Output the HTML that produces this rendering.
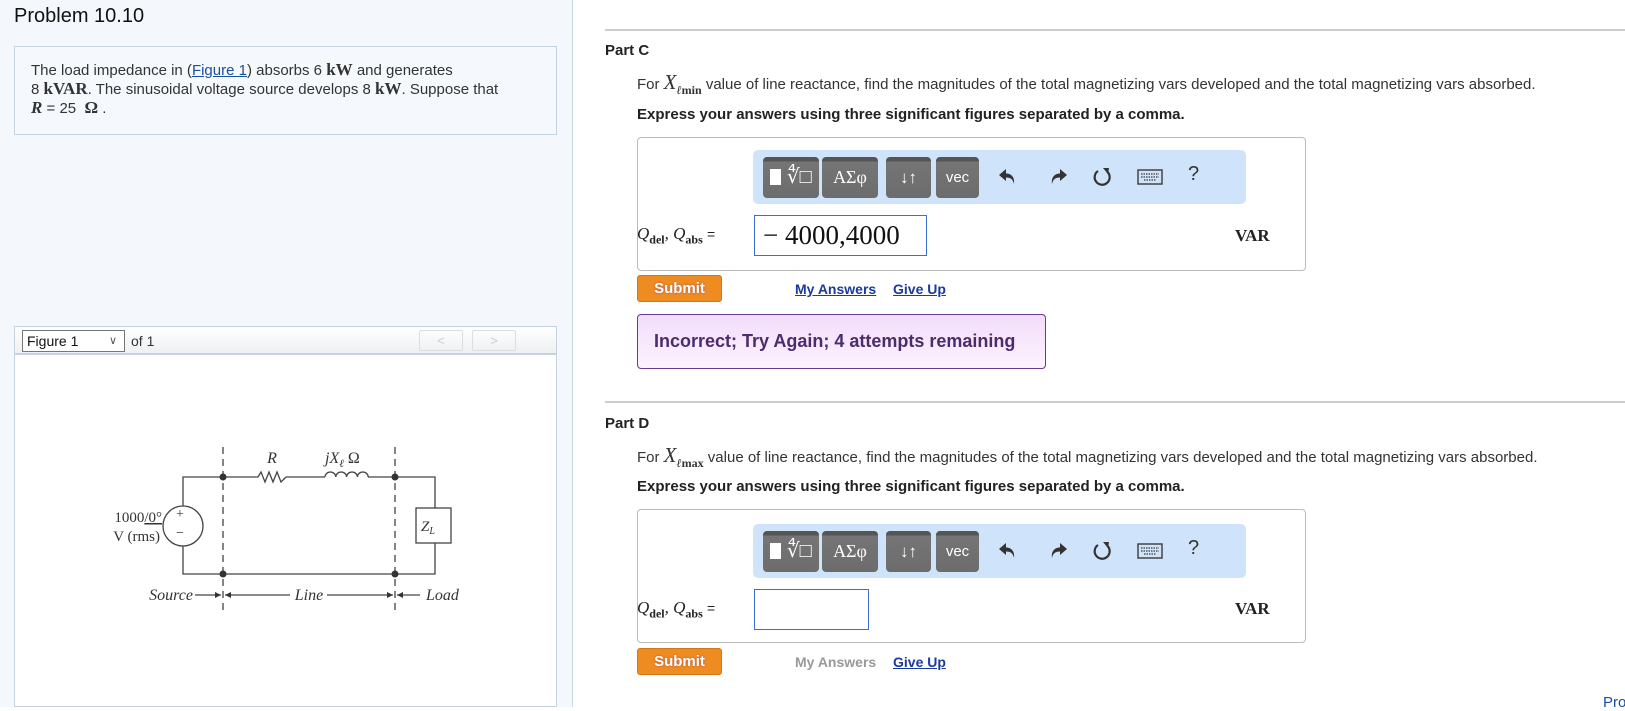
<!DOCTYPE html>
<html><head><meta charset="utf-8"><style>
*{margin:0;padding:0;box-sizing:border-box}
body{width:1625px;height:707px;overflow:hidden;background:#fff;font-family:"Liberation Sans",Arial,sans-serif;color:#222;position:relative}
.a{position:absolute}
.m{font-family:"Liberation Serif",serif}
.tb{background:#cfe4fb;border-radius:5px}
.btn{position:absolute;top:7px;height:41px;background:linear-gradient(#555 0,#555 4px,#757575 5px,#6c6c6c);border-radius:4px;color:#fff;text-align:center;line-height:41px}
.ic{position:absolute;top:16px}
.sub{background:#ee8c22;border:1px solid #d07918;border-radius:3px;color:#fff;font-weight:bold;font-size:15px;text-align:center;line-height:25px;text-shadow:0 0 2px #a55}
.lnk{color:#1a3a9c;font-weight:bold;font-size:14px;text-decoration:underline}
</style></head><body>
<div class="a" style="left:0;top:0;width:573px;height:707px;background:#f4f8fd;border-right:1px solid #c9d6e3"></div>
<div class="a" style="left:14px;top:5px;font-size:20px;color:#111">Problem 10.10</div>
<div class="a" style="left:14px;top:46px;width:543px;height:89px;border:1px solid #c5d3e0;background:#f5f9fd"></div>
<div class="a" style="left:31px;top:61px;font-size:15px;line-height:18px;color:#333">The load impedance in (<span style="color:#1a4ea0;text-decoration:underline">Figure 1</span>) absorbs 6 <b class="m" style="font-size:17px">kW</b> and generates<br>8 <b class="m" style="font-size:17px">kVAR</b>. The sinusoidal voltage source develops 8 <b class="m" style="font-size:17px">kW</b>. Suppose that<br><b class="m" style="font-size:17px;font-style:italic">R</b> = 25 &nbsp;<b class="m" style="font-size:17px">Ω</b> .</div>
<div class="a" style="left:14px;top:326px;width:543px;height:381px;border:1px solid #c5d3e0;background:#fff"></div>
<div class="a" style="left:15px;top:327px;width:541px;height:28px;background:linear-gradient(#fff,#eef0f2);border-bottom:2px solid #c5d3e0"></div>
<div class="a" style="left:22px;top:330px;width:103px;height:22px;border:1px solid #777;background:#fff;font-size:14px;line-height:20px;padding-left:4px;color:#111">Figure 1<span class="a" style="left:86px;top:0;font-size:11px;color:#555">∨</span></div>
<div class="a" style="left:131px;top:333px;font-size:14px;color:#333">of 1</div>
<div class="a" style="left:419px;top:330px;width:44px;height:21px;border:1px solid #ddd;border-radius:2px;color:#ccc;text-align:center;font-size:13px;line-height:19px">&lt;</div>
<div class="a" style="left:472px;top:330px;width:44px;height:21px;border:1px solid #ddd;border-radius:2px;color:#ccc;text-align:center;font-size:13px;line-height:19px">&gt;</div>
<svg class="a" style="left:80px;top:420px" width="420" height="200" viewBox="80 420 420 200" font-family="Liberation Serif" fill="#333">
<g stroke="#444" stroke-width="1.3" fill="none">
<polyline points="183,506 183,477 258,477"/><polyline points="286,477 325,477"/><polyline points="368,477 435,477 435,508"/>
<polyline points="435,543 435,574 183,574 183,546"/>
<circle cx="183" cy="526" r="20"/>
<polyline points="258,477 261,472 265,482 269,472 273,482 277,472 281,482 286,477"/>
<path d="M325,477 a5.4,5 0 0 1 10.8,0 a5.4,5 0 0 1 10.8,0 a5.4,5 0 0 1 10.8,0 a5.4,5 0 0 1 10.8,0"/>
<rect x="416" y="508" width="35" height="35"/>
<path d="M223,447 V610 M395,447 V610" stroke-dasharray="7,5"/>
<path d="M195,595 H221 M225,595 H290 M327,595 H393 M397,595 H420"/>
</g>
<circle cx="223" cy="477" r="3.5"/><circle cx="395" cy="477" r="3.5"/><circle cx="223" cy="574" r="3.5"/><circle cx="395" cy="574" r="3.5"/>
<path d="M221,595 l-6,-3 v6z M225,595 l6,-3 v6z M393,595 l-6,-3 v6z M397,595 l6,-3 v6z"/>
<text x="176" y="518" font-size="14">+</text><text x="176" y="537" font-size="14">−</text>
<text x="272" y="463" font-size="16" font-style="italic" text-anchor="middle">R</text>
<text x="325" y="463" font-size="16"><tspan font-style="italic">jX</tspan><tspan font-style="italic" font-size="11" dy="4">ℓ</tspan><tspan dy="-4"> Ω</tspan></text>
<text x="162" y="522" font-size="15" text-anchor="end">1000<tspan text-decoration="underline">/0°</tspan></text>
<text x="160" y="541" font-size="15" text-anchor="end">V (rms)</text>
<text x="421" y="531" font-size="15" font-style="italic">Z<tspan font-size="10" dy="3">L</tspan></text>
<text x="193" y="600" font-size="16" font-style="italic" text-anchor="end">Source</text>
<text x="309" y="600" font-size="16" font-style="italic" text-anchor="middle">Line</text>
<text x="426" y="600" font-size="16" font-style="italic">Load</text>
</svg>

<!-- Part C -->
<div class="a" style="left:605px;top:29px;width:1020px;height:2px;background:#ccc"></div>
<div class="a" style="left:605px;top:42px;font-size:15px;font-weight:bold;color:#222">Part C</div>
<div class="a" style="left:637px;top:70px;font-size:15px;color:#333">For <span class="m" style="font-size:21px;font-style:italic">X<sub style="font-size:12px;font-style:normal;font-weight:bold"><i>ℓ</i>min</sub></span> value of line reactance, find the magnitudes of the total magnetizing vars developed and the total magnetizing vars absorbed.</div>
<div class="a" style="left:637px;top:106px;font-size:15px;font-weight:bold;color:#222">Express your answers using three significant figures separated by a comma.</div>
<div class="a" style="left:637px;top:137px;width:669px;height:134px;border:1px solid #bbb;border-radius:4px"></div>
<div class="a tb" style="left:753px;top:150px;width:493px;height:54px">
<div class="btn" style="left:10px;width:56px;font-size:20px"><span style="display:inline-block;width:11px;height:16px;background:#fff;vertical-align:-2px"></span> ∜□</div>
<div class="btn m" style="left:69px;width:56px;font-size:18px">ΑΣφ</div>
<div class="btn" style="left:133px;width:45px;font-size:17px">↓↑</div>
<div class="btn" style="left:183px;width:43px;font-size:15px">vec</div>
<svg class="ic" style="left:244px" width="22" height="22" viewBox="0 0 22 22"><path d="M9 3 L2 9 L9 15 V11.5 C14 11.5 16 13.5 17 18 C18 11 14 7.5 9 7.5 Z" fill="#333"/></svg>
<svg class="ic" style="left:294px" width="22" height="22" viewBox="0 0 22 22"><path d="M13 3 L20 9 L13 15 V11.5 C8 11.5 6 13.5 5 18 C4 11 8 7.5 13 7.5 Z" fill="#333"/></svg>
<svg class="ic" style="left:339px" width="22" height="22" viewBox="0 0 22 22"><path d="M15 5.5 A7.5 7.5 0 1 1 6 5" fill="none" stroke="#333" stroke-width="2.2"/><path d="M11 2 L17 2 L16 8 Z" fill="#333"/></svg>
<svg class="ic" style="left:384px;top:19px" width="26" height="16" viewBox="0 0 26 16"><rect x="1" y="1" width="24" height="14" fill="none" stroke="#444" stroke-width="1.5"/><path d="M4 5h18M4 8h18M7 11h12" stroke="#555" stroke-width="1.5" stroke-dasharray="1.5,1"/></svg>
<div class="a" style="left:435px;top:13px;font-size:20px;color:#333">?</div>
</div>
<div class="a m" style="left:637px;top:224px;font-size:17px;font-style:italic">Q<sub style="font-size:12px;font-style:normal;font-weight:bold">del</sub>, Q<sub style="font-size:12px;font-style:normal;font-weight:bold">abs</sub> <span style="font-family:'Liberation Sans';font-style:normal;font-size:14px">=</span></div>
<div class="a m" style="left:754px;top:215px;width:173px;height:41px;border:1px solid #3a6fd0;font-size:27px;line-height:38px;padding-left:8px;color:#111">− 4000,4000</div>
<div class="a m" style="left:1235px;top:226px;font-size:17px;font-weight:bold">VAR</div>
<div class="a sub" style="left:637px;top:275px;width:85px;height:27px">Submit</div>
<div class="a lnk" style="left:795px;top:281px">My Answers</div>
<div class="a lnk" style="left:893px;top:281px">Give Up</div>
<div class="a" style="left:637px;top:314px;width:409px;height:55px;border:1px solid #6a3a8e;border-radius:4px;background:linear-gradient(#f2dcfa,#fdf2fe);color:#4b2d6b;font-weight:bold;font-size:18px;line-height:53px;padding-left:16px">Incorrect; Try Again; 4 attempts remaining</div>

<!-- Part D -->
<div class="a" style="left:605px;top:401px;width:1020px;height:2px;background:#ccc"></div>
<div class="a" style="left:605px;top:415px;font-size:15px;font-weight:bold;color:#222">Part D</div>
<div class="a" style="left:637px;top:443px;font-size:15px;color:#333">For <span class="m" style="font-size:21px;font-style:italic">X<sub style="font-size:12px;font-style:normal;font-weight:bold"><i>ℓ</i>max</sub></span> value of line reactance, find the magnitudes of the total magnetizing vars developed and the total magnetizing vars absorbed.</div>
<div class="a" style="left:637px;top:478px;font-size:15px;font-weight:bold;color:#222">Express your answers using three significant figures separated by a comma.</div>
<div class="a" style="left:637px;top:509px;width:669px;height:134px;border:1px solid #bbb;border-radius:4px"></div>
<div class="a tb" style="left:753px;top:524px;width:493px;height:54px">
<div class="btn" style="left:10px;width:56px;font-size:20px"><span style="display:inline-block;width:11px;height:16px;background:#fff;vertical-align:-2px"></span> ∜□</div>
<div class="btn m" style="left:69px;width:56px;font-size:18px">ΑΣφ</div>
<div class="btn" style="left:133px;width:45px;font-size:17px">↓↑</div>
<div class="btn" style="left:183px;width:43px;font-size:15px">vec</div>
<svg class="ic" style="left:244px" width="22" height="22" viewBox="0 0 22 22"><path d="M9 3 L2 9 L9 15 V11.5 C14 11.5 16 13.5 17 18 C18 11 14 7.5 9 7.5 Z" fill="#333"/></svg>
<svg class="ic" style="left:294px" width="22" height="22" viewBox="0 0 22 22"><path d="M13 3 L20 9 L13 15 V11.5 C8 11.5 6 13.5 5 18 C4 11 8 7.5 13 7.5 Z" fill="#333"/></svg>
<svg class="ic" style="left:339px" width="22" height="22" viewBox="0 0 22 22"><path d="M15 5.5 A7.5 7.5 0 1 1 6 5" fill="none" stroke="#333" stroke-width="2.2"/><path d="M11 2 L17 2 L16 8 Z" fill="#333"/></svg>
<svg class="ic" style="left:384px;top:19px" width="26" height="16" viewBox="0 0 26 16"><rect x="1" y="1" width="24" height="14" fill="none" stroke="#444" stroke-width="1.5"/><path d="M4 5h18M4 8h18M7 11h12" stroke="#555" stroke-width="1.5" stroke-dasharray="1.5,1"/></svg>
<div class="a" style="left:435px;top:13px;font-size:20px;color:#333">?</div>
</div>
<div class="a m" style="left:637px;top:598px;font-size:17px;font-style:italic">Q<sub style="font-size:12px;font-style:normal;font-weight:bold">del</sub>, Q<sub style="font-size:12px;font-style:normal;font-weight:bold">abs</sub> <span style="font-family:'Liberation Sans';font-style:normal;font-size:14px">=</span></div>
<div class="a" style="left:754px;top:589px;width:115px;height:41px;border:1px solid #3a6fd0"></div>
<div class="a m" style="left:1235px;top:599px;font-size:17px;font-weight:bold">VAR</div>
<div class="a sub" style="left:637px;top:648px;width:85px;height:27px">Submit</div>
<div class="a" style="left:795px;top:654px;font-size:14px;font-weight:bold;color:#999">My Answers</div>
<div class="a lnk" style="left:893px;top:654px">Give Up</div>
<div class="a" style="left:1603px;top:694px;font-size:15px;color:#1a4ea0">Pro</div>
</body></html>
